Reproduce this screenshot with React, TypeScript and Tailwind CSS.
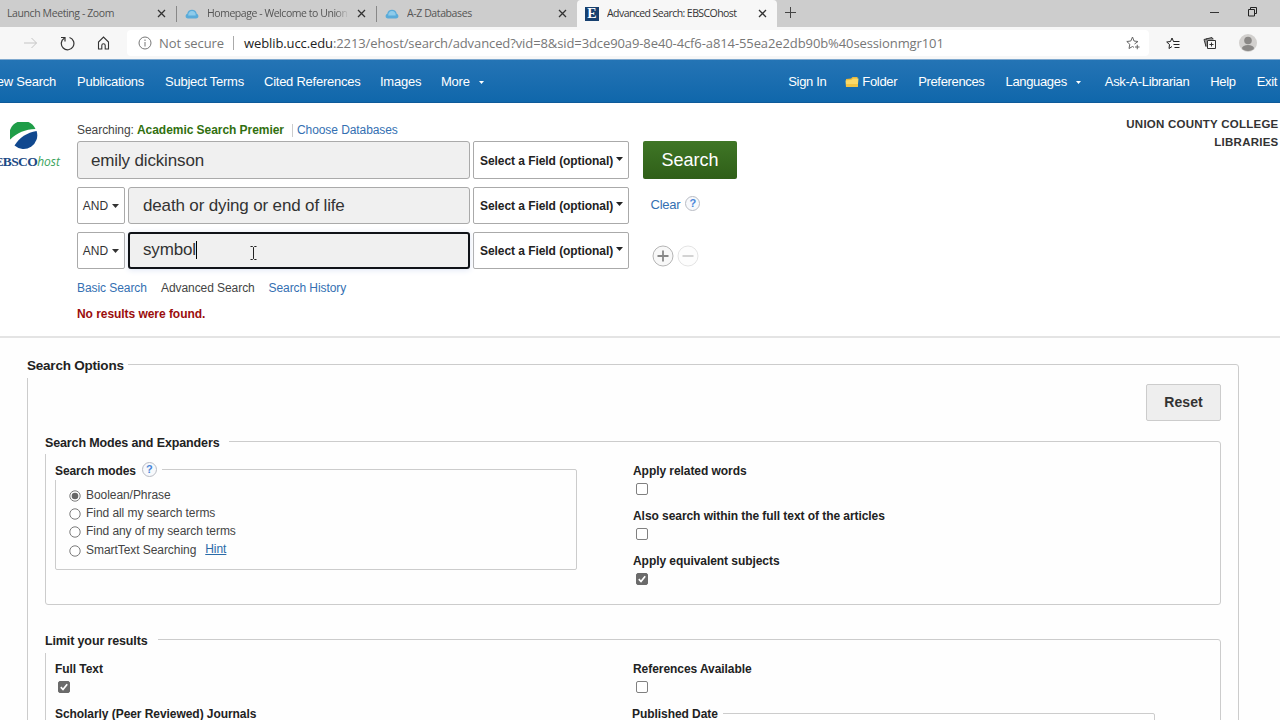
import React from 'react';
import clsx from 'clsx';

const CloseIcon = () => (
  <svg width="9" height="9" viewBox="0 0 9 9" className="shrink-0" stroke="#333" strokeWidth="1.3">
    <path d="M1 1l7 7M8 1L1 8" />
  </svg>
);

const CloudIcon = () => (
  <svg width="14" height="12" viewBox="0 0 14 12" className="shrink-0">
    <path d="M3 10.500C1.400 10.500.600 9.600.600 8.300c0-1.300.700-2.200 1.700-2.500C2.600 3.200 4.400 1.800 7 1.800s4.400 1.400 4.700 4c1 .300 1.700 1.200 1.700 2.500 0 1.300-.800 2.200-2.400 2.200z" fill="#5aabd9" />
    <path d="M3.200 7.500C3.300 4.500 4.700 2.900 7 2.900s3.700 1.600 3.800 4.600z" fill="#8ecbea" />
  </svg>
);

const EbscoFavicon = () => (
  <span className="flex h-[14px] w-[14px] shrink-0 items-center justify-center bg-[#17406f] font-['Liberation_Serif',serif] text-[14px] leading-none font-bold text-white">
    E
  </span>
);

const Caret = ({ className }: { className?: string }) => (
  <svg width="7" height="4" viewBox="0 0 7 4" className={clsx('shrink-0', className)} fill="currentColor">
    <path d="M0 0h7L3.500 4z" />
  </svg>
);

const HelpIcon = () => (
  <span className="flex h-[15px] w-[15px] shrink-0 items-center justify-center rounded-full border border-[#b9bcc4] bg-[#f7f9fc] text-[11px] leading-none font-bold tracking-normal text-[#4a86d8]">
    ?
  </span>
);

const FolderIcon = () => (
  <svg width="14" height="12" viewBox="0 0 14 12" className="mr-[3px] shrink-0">
    <path d="M1 3l5-.500 1.500-1.500h5v9.500H1z" fill="#e9b93c" />
    <path d="M.500 4.500l6-.700L8 2.500h5.500l-.800 8.500H1z" fill="#fbd968" />
    <path d="M1 8h12l-.300 3H1z" fill="#f2c545" />
  </svg>
);

interface TabProps {
  title: string;
  icon?: React.ReactNode;
  active?: boolean;
  className: string;
  titleClass?: string;
}

const Tab: React.FC<TabProps> = ({ title, icon, active, className, titleClass }) => (
  <div
    className={clsx(
      'flex h-[27px] items-center pr-[10px]',
      active ? 'rounded-t bg-[#f7f7f7] text-[#333]' : 'text-[#555]',
      className
    )}
  >
    {icon}
    <span className={clsx('flex-1 overflow-hidden text-[10.5px] whitespace-nowrap', titleClass)}>{title}</span>
    <CloseIcon />
  </div>
);

const BrowserChrome = () => (
  <div className="font-['Open_Sans','Noto_Sans',sans-serif]">
    <div className="flex h-[27px] items-center bg-[#cdcdcd]">
      <Tab title="Launch Meeting - Zoom" className="w-[176px] pl-[7px]" titleClass="tracking-[-0.4px]" />
      <div className="h-4 w-px bg-[#888]" />
      <Tab
        title="Homepage - Welcome to Union"
        icon={<CloudIcon />}
        className="w-[199px] pl-2"
        titleClass="ml-[8px] mr-[8px] tracking-[-0.45px] [mask-image:linear-gradient(to_right,black_90%,transparent)]"
      />
      <div className="h-4 w-px bg-[#888]" />
      <Tab title="A-Z Databases" icon={<CloudIcon />} className="w-[200px] pl-2" titleClass="ml-[8px] tracking-[-0.4px]" />
      <Tab
        title="Advanced Search: EBSCOhost"
        icon={<EbscoFavicon />}
        active
        className="w-[200px] pl-2"
        titleClass="ml-[8px] tracking-[-0.56px]"
      />
      <svg width="11" height="11" viewBox="0 0 11 11" className="-mt-[2px] ml-[8px]" stroke="#444">
        <path d="M5.500 0v11M0 5.500h11" />
      </svg>
      <svg width="9" height="9" viewBox="0 0 9 9" className="-mt-[2px] mr-[28px] ml-auto" stroke="#333">
        <path d="M0 4.500h9" />
      </svg>
      <svg width="10" height="10" viewBox="0 0 10 10" className="-mt-[3px] mr-[23px]" stroke="#222" fill="none">
        <path d="M1.500 2.500h6V9h-6zM3.500 2.500v-2h6v6h-2" />
      </svg>
    </div>
    <div className="flex h-[32px] items-center bg-[#f7f7f7]">
      <svg width="14" height="12" viewBox="0 0 14 12" className="ml-[24px]" stroke="#c5c5c5" fill="none">
        <path d="M0 6h12.500M7.500 1l5 5-5 5" />
      </svg>
      <svg width="15" height="15" viewBox="0 0 15 15" className="ml-[22px]" stroke="#333" strokeWidth="1.200" fill="none">
        <path d="M4.200 2.200A6.300 6.300 0 1 0 9.500 1.500M1 1.500h4v4" />
      </svg>
      <svg width="13" height="14" viewBox="0 0 13 14" className="ml-[22px]" stroke="#333" strokeWidth="1.100" fill="none">
        <path d="M1.500 6v7h3.300V9.500a1.700 1.700 0 0 1 3.400 0V13h3.300V6L6.500 1z" />
      </svg>
      <div className="ml-[17px] flex h-[26px] w-[1022px] items-center rounded bg-white pl-[11px] text-[13px] text-[#777]">
        <svg width="14" height="14" viewBox="0 0 14 14" fill="none" stroke="#777">
          <circle cx="7" cy="7" r="6" />
          <path d="M7 6v4.500M7 3.500V5" />
        </svg>
        <span className="mt-px ml-[7px] w-[64px] tracking-[-0.1px] whitespace-nowrap">Not secure</span>
        <span className="ml-[10px] h-[14px] w-px bg-[#aaa]" />
        <span className="mt-px ml-[10px] tracking-[-0.1px] whitespace-nowrap">
          <span className="text-[#222]">weblib.ucc.edu</span>:2213/ehost/search/advanced?vid=8&amp;sid=3dce90a9-8e40-4cf6-a814-55ea2e2db90b%40sessionmgr101
        </span>
        <svg width="14" height="14" viewBox="0 0 14 14" className="mr-[9px] ml-auto" fill="none" stroke="#666">
          <path d="M8.500 8l3.500-2.500-4-.500L6.500 1 4.800 5l-4 .500 3 2.800L3 12.500l3.500-2 1.500.900M9 11h4.500M11.250 8.750v4.500" />
        </svg>
      </div>
      <svg width="14" height="13" viewBox="0 0 14 13" className="ml-[17px]" fill="none" stroke="#222">
        <path d="M8.500 4.500h-1L6 1 4.500 4.500.700 5l2.800 2.500L3 11.500l3-2M7.500 4.500h6M7.500 7.500h6M8.500 10.500h5" />
      </svg>
      <svg width="14" height="14" viewBox="0 0 14 14" className="ml-[23px]" fill="none" stroke="#333">
        <path d="M4.500 4.500h8v8h-8zM8.500 6.500v4M6.500 8.500h4M3 10.500L1 3.500l8-2 .500 1.500M3 10.500V3h7.500" />
      </svg>
      <svg width="18" height="18" viewBox="0 0 18 18" className="ml-[22px]">
        <circle cx="9" cy="9" r="9" fill="#d2d0ce" />
        <circle cx="9" cy="6.500" r="3.800" fill="#8a8886" />
        <ellipse cx="9" cy="14" rx="6" ry="3" fill="#8a8886" />
      </svg>
    </div>
  </div>
);

const NavBar = () => (
  <nav className="flex h-[44px] items-center justify-between border-t border-b border-t-[#7fa9cf] border-b-[#0e5a99] bg-linear-to-b from-[#2474b5] to-[#0f67ab] pt-[2px] pr-[3px] text-[13px] whitespace-nowrap text-white">
    <div className="-ml-[13px] flex items-center gap-[21px] tracking-[-0.25px]">
      <span className="w-[69px] text-right">New Search</span>
      <span className="w-[67px]">Publications</span>
      <span className="w-[78px]">Subject Terms</span>
      <span className="w-[95px]">Cited References</span>
      <span className="w-[40px]">Images</span>
      <span className="flex items-center">
        More <Caret className="ml-[9px] h-[3px] w-[5px]" />
      </span>
    </div>
    <div className="flex items-center gap-[21px] tracking-[-0.34px]">
      <span>Sign In</span>
      <span className="-ml-[2px] flex items-center">
        <FolderIcon />
        Folder
      </span>
      <span>Preferences</span>
      <span className="flex items-center">
        Languages <Caret className="mr-[3px] ml-[9px] h-[3px] w-[5px]" />
      </span>
      <span>Ask-A-Librarian</span>
      <span>Help</span>
      <span>Exit</span>
    </div>
  </nav>
);

const Logo = () => (
  <div className="flex w-[60px] shrink-0 flex-col">
    <svg width="28" height="28" viewBox="0 0 28 28" className="mt-[19px] ml-[10px]">
      <path d="M.200 17.500A13.700 13.700 0 0 1 25.500 7C15 7.500 7.500 10.500.200 17.500z" fill="#1f9d48" />
      <path d="M4.500 23.500C9.500 15.500 17 10.500 26.600 9A13.700 13.700 0 0 1 4.500 23.500z" fill="#10488f" />
    </svg>
    <div className="mt-[2px] flex w-[60px] items-baseline justify-end leading-[20px] whitespace-nowrap">
      <span className="font-['Liberation_Serif',serif] text-[13.500px] font-bold tracking-[-0.6px] text-[#1d4a85]">EBSCO</span>
      <span className="font-['Open_Sans',sans-serif] text-[12px] text-[#3aa35c] italic">host</span>
    </div>
  </div>
);

interface SearchRowProps {
  text: string;
  operator?: string;
  focused?: boolean;
}

const SearchRow: React.FC<SearchRowProps> = ({ text, operator, focused }) => (
  <div className={clsx('flex gap-[3px]', operator ? 'h-[37px]' : 'h-[38px]')}>
    {operator && (
      <button className="flex w-[48px] items-center justify-center gap-[4px] rounded-[2px] border border-[#aaa] bg-white text-[12px] tracking-[0.1px] text-[#333]">
        {operator}
        <Caret className="h-[4px] w-[7px]" />
      </button>
    )}
    <div
      className={clsx(
        'relative flex flex-1 items-center rounded-[3px] bg-[#f0f0f0] text-[17px] tracking-[-0.15px] text-[#333]',
        focused ? 'border-2 border-[#101318] pb-px pl-[13px] shadow-[0_1px_6px_#dfe6f5]' : 'border border-[#aaa] pt-px pl-[13px]',
        operator && !focused && 'pl-[14px]'
      )}
    >
      {text}
      {focused && <span className="h-[18px] w-px bg-black" />}
      {focused && (
        <svg width="7" height="14" viewBox="0 0 7 14" className="absolute top-[12px] left-[120px]" fill="none" stroke="#222">
          <path d="M.500 .500h2l1 1 1-1h2M3.500 1.500v11M.500 13.500h2l1-1 1 1h2" />
        </svg>
      )}
    </div>
    <button
      className={clsx(
        'flex w-[156px] items-center rounded-[2px] border border-[#aaa] bg-white pl-[6px] text-[12px] font-bold tracking-[-0.06px] whitespace-nowrap text-[#222]',
        !operator && 'pt-px'
      )}
    >
      <span className="w-[136px] text-left">Select a Field (optional)</span>
      <Caret className="-mt-[3px] h-[4px] w-[7px]" />
    </button>
  </div>
);

const SearchHeader = () => (
  <header className="flex h-[235px] border-b-2 border-[#e4e4e4] bg-white">
    <Logo />
    <div className="ml-[17px] w-[552px]">
      <div className="mt-[19px] flex h-[16px] items-center text-[12px] whitespace-nowrap text-[#444]">
        <span className="w-[60px] tracking-[-0.05px]">Searching:</span>
        <span className="w-[155px] font-bold tracking-[-0.05px] text-[#31700f]">Academic Search Premier</span>
        <span className="mr-[4px] h-[13px] w-px bg-[#ccc]" />
        <span className="tracking-[-0.08px] text-[#3470b2]">Choose Databases</span>
      </div>
      <div className="mt-[3px] flex flex-col gap-[8px]">
        <SearchRow text="emily dickinson" />
        <SearchRow text="death or dying or end of life" operator="AND" />
        <SearchRow text="symbol" operator="AND" focused />
      </div>
      <div className="mt-[10px] flex h-[18px] items-center text-[12px] tracking-[-0.07px] whitespace-nowrap text-[#3470b2]">
        <span className="w-[84px]">Basic Search</span>
        <span className="w-[107.500px] text-[#444]">Advanced Search</span>
        <span>Search History</span>
      </div>
      <p className="mt-[8px] text-[12px] leading-[18px] font-bold tracking-[-0.05px] text-[#9b0d0d]">No results were found.</p>
    </div>
    <div className="mt-[38px] ml-[14px] w-[94px]">
      <button className="h-[38px] w-[94px] rounded-[2px] bg-linear-to-b from-[#3f7626] to-[#2f5f18] text-[18px] text-white">
        Search
      </button>
      <div className="mt-[16px] ml-[7.500px] flex h-[16px] items-center gap-[5px] text-[13px] tracking-[-0.25px] text-[#3470b2]">
        <span className="mt-[3px]">Clear</span>
        <HelpIcon />
      </div>
      <div className="mt-[34px] ml-[9px] flex gap-[3px]">
        <svg width="22" height="22" viewBox="0 0 22 22" fill="none">
          <circle cx="11" cy="11" r="10" fill="#f8f8f8" stroke="#b5b5b5" />
          <path d="M11 5.500v11M5.500 11h11" stroke="#888" strokeWidth="1.800" />
        </svg>
        <svg width="22" height="22" viewBox="0 0 22 22" fill="none">
          <circle cx="11" cy="11" r="10" fill="#fdfdfd" stroke="#e4e4e4" />
          <path d="M5.500 11h11" stroke="#c4c4c4" strokeWidth="1.500" />
        </svg>
      </div>
    </div>
    <div className="mt-[13px] ml-auto pr-[1.500px] text-right text-[11.500px] leading-[17.500px] font-bold tracking-[0.24px] whitespace-nowrap text-[#333]">
      UNION COUNTY COLLEGE
      <br />
      LIBRARIES
    </div>
  </header>
);

const Checkbox = ({ checked }: { checked?: boolean }) => (
  <svg width="12" height="12" viewBox="0 0 12 12" fill="none">
    <rect x=".500" y=".500" width="11" height="11" rx="1.500" fill={checked ? '#6b6b6b' : '#fff'} stroke={checked ? '#6b6b6b' : '#808080'} />
    {checked && <path d="M2.800 6.200l2.200 2.300 4.200-5.300" stroke="#fff" strokeWidth="1.700" />}
  </svg>
);

interface CheckFieldProps {
  label: string;
  checked?: boolean;
}

const CheckField: React.FC<CheckFieldProps> = ({ label, checked }) => (
  <div className="flex flex-col gap-[4px]">
    <span className="h-[16px] text-[12px] leading-[16px] font-bold tracking-[-0.06px] whitespace-nowrap text-[#222]">{label}</span>
    <span className="ml-[3px]">
      <Checkbox checked={checked} />
    </span>
  </div>
);

const modes = ['Boolean/Phrase', 'Find all my search terms', 'Find any of my search terms', 'SmartText Searching'];

const SearchModes = () => (
  <fieldset className="h-[112px] w-[522px] rounded-[2px] border border-[#ccc]">
    <legend className="-ml-px flex h-[22px] w-[107px] items-center gap-[6px] bg-[#fefefe] text-[12px] font-bold tracking-[-0.1px] whitespace-nowrap text-[#222]">
      <span className="mt-[3px]">Search modes</span> <HelpIcon />
    </legend>
    <div className="mt-[6px] flex flex-col pl-[13px]">
      {modes.map((mode, i) => (
        <label key={mode} className="flex h-[18.200px] items-center text-[12px] tracking-[-0.06px] whitespace-nowrap text-[#444]">
          <svg width="12" height="12" viewBox="0 0 12 12" className="mt-[2px] mr-[5px]" fill="none">
            <circle cx="6" cy="6" r="5.200" fill="#fff" stroke="#7a7a7a" />
            {i === 0 && <circle cx="6" cy="6" r="3.300" fill="#666" />}
          </svg>
          {mode}
          {i === 3 && <span className="mb-[2px] ml-[9px] text-[#2b6ba8] underline">Hint</span>}
        </label>
      ))}
    </div>
  </fieldset>
);

const App: React.FC = () => {
  return (
    <div className="h-[720px] w-[1280px] overflow-hidden bg-[#fefefe] font-['Liberation_Sans',Arial,sans-serif]">
      <BrowserChrome />
      <NavBar />
      <SearchHeader />
      <main className="pt-[13px] pl-[27px]">
        <fieldset className="h-[420px] w-[1212px] rounded-[3px] border border-[#ccc] px-[17px]">
          <legend className="-ml-[18px] h-[27px] w-[101px] bg-[#fefefe] text-[13.500px] leading-[29px] font-bold tracking-[-0.22px] whitespace-nowrap text-[#222]">
            Search Options
          </legend>
          <div className="mt-[6px] flex justify-end">
            <button className="h-[37px] w-[75px] rounded-[2px] border border-[#ccc] bg-[#eee] text-[14px] font-bold tracking-[0.1px] text-[#333]">
              Reset
            </button>
          </div>
          <fieldset className="mt-[7px] h-[177px] rounded-[3px] border border-[#ccc]">
            <legend className="-ml-px h-[26px] w-[184px] bg-[#fefefe] text-[12.500px] leading-[30px] font-bold tracking-[-0.13px] whitespace-nowrap text-[#222]">
              Search Modes and Expanders
            </legend>
            <div className="flex gap-[56px] pt-[4px] pl-[9px]">
              <SearchModes />
              <div className="flex flex-col gap-[13px] pt-[5px]">
                <CheckField label="Apply related words" />
                <CheckField label="Also search within the full text of the articles" />
                <CheckField label="Apply equivalent subjects" checked />
              </div>
            </div>
          </fieldset>
          <fieldset className="mt-[21px] h-[176px] rounded-[3px] border border-[#ccc]">
            <legend className="-ml-px h-[27px] w-[113px] bg-[#fefefe] text-[12.500px] leading-[31px] font-bold tracking-[-0.13px] whitespace-nowrap text-[#222]">
              Limit your results
            </legend>
            <div className="flex pt-[8px] pl-[9px]">
              <div className="flex w-[578px] flex-col gap-[13px]">
                <CheckField label="Full Text" checked />
                <CheckField label="Scholarly (Peer Reviewed) Journals" />
              </div>
              <div className="flex flex-col gap-[13px]">
                <CheckField label="References Available" />
                <fieldset className="-mt-px h-[60px] w-[522px] rounded-[2px] border border-[#ccc]">
                  <legend className="-ml-[2px] h-[16px] w-[91px] bg-[#fefefe] text-[12px] leading-[18px] font-bold tracking-[-0.06px] whitespace-nowrap text-[#222]">
                    Published Date
                  </legend>
                </fieldset>
              </div>
            </div>
          </fieldset>
        </fieldset>
      </main>
    </div>
  );
};

export default App;
